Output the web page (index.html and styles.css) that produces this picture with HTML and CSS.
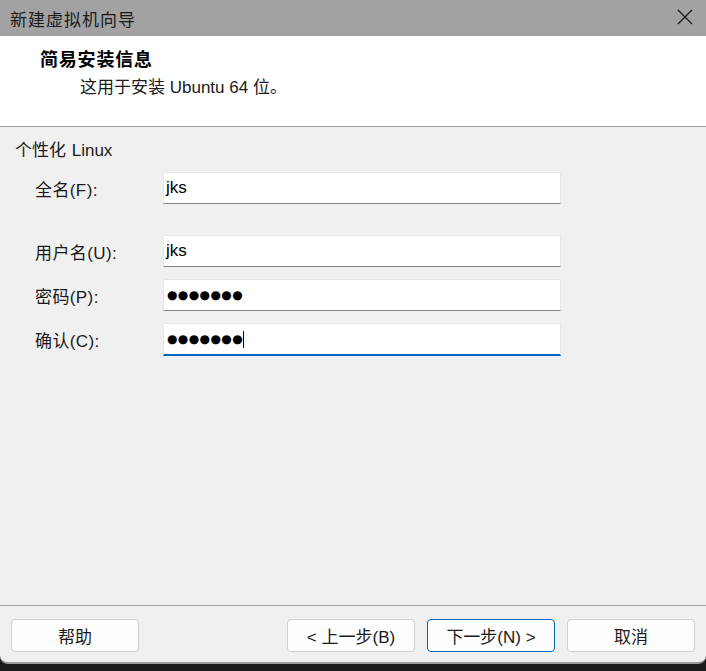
FILE: index.html
```html
<!DOCTYPE html>
<html lang="zh-CN">
<head>
<meta charset="utf-8">
<title>新建虚拟机向导</title>
<link rel="stylesheet" href="styles.css">
</head>
<body>
<div class="window">
  <div class="titlebar">
    <span class="title">新建虚拟机向导</span>
    <span class="close">
      <svg width="16" height="16" viewBox="0 0 16 16"><path d="M1 1 L15 15 M15 1 L1 15" stroke="#1a1a1a" stroke-width="1.3" fill="none"/></svg>
    </span>
  </div>
  <div class="header">
    <div class="h-title">简易安装信息</div>
    <div class="h-sub">这用于安装 Ubuntu 64 位。</div>
  </div>
  <div class="content">
    <div class="group-title">个性化 Linux</div>
    <div class="form">
      <div class="row">
        <span class="label">全名(F):</span>
        <div class="field">jks</div>
      </div>
      <div class="row row-gap">
        <span class="label">用户名(U):</span>
        <div class="field">jks</div>
      </div>
      <div class="row">
        <span class="label">密码(P):</span>
        <div class="field dots">●●●●●●●</div>
      </div>
      <div class="row">
        <span class="label">确认(C):</span>
        <div class="field dots focused">●●●●●●●<span class="caret"></span></div>
      </div>
    </div>
  </div>
  <div class="footer">
    <button class="btn">帮助</button>
    <div class="spacer"></div>
    <button class="btn">&lt; 上一步(B)</button>
    <button class="btn primary">下一步(N) &gt;</button>
    <button class="btn">取消</button>
  </div>
</div>
</body>
</html>
```

FILE: styles.css
```css
html, body {
  margin: 0;
  padding: 0;
  background: #1c1c1c;
  width: 706px;
  height: 671px;
  overflow: hidden;
}
body {
  font-family: "Liberation Sans", "Noto Sans CJK SC", sans-serif;
  color: #1a1a1a;
}
.window {
  width: 706px;
  height: 662px;
  background: #f0f0f0;
  border-bottom: 2px solid #9c9c9c;
  border-radius: 0 0 8px 8px;
  display: flex;
  flex-direction: column;
  overflow: hidden;
}
.titlebar {
  height: 36px;
  background: #a2a2a2;
  display: flex;
  align-items: center;
  justify-content: space-between;
  padding: 0 13px 0 10px;
  flex: none;
}
.title {
  font-size: 17px;
  letter-spacing: 1px;
  color: #1a1a1a;
}
.close {
  display: flex;
  width: 16px;
  height: 16px;
  margin-top: -2px;
}
.header {
  background: #ffffff;
  border-bottom: 1px solid #a0a0a0;
  padding: 12px 0 0 40px;
  box-sizing: border-box;
  height: 91px;
  flex: none;
}
.h-title {
  font-size: 18px;
  line-height: 24px;
  font-weight: bold;
  letter-spacing: 0.8px;
  color: #000;
}
.h-sub {
  margin: 4px 0 0 40px;
  font-size: 17px;
  line-height: 24px;
  color: #1a1a1a;
}
.content {
  flex: 1;
  padding: 12px 0 0 15px;
}
.group-title {
  font-size: 17px;
  line-height: 24px;
  word-spacing: 1px;
}
.form {
  margin-top: 9px;
  padding-left: 20px;
  display: flex;
  flex-direction: column;
  gap: 12px;
}
.row {
  display: flex;
  align-items: center;
}
.row-gap {
  margin-top: 19px;
}
.label {
  width: 128px;
  font-size: 17px;
  letter-spacing: 0.4px;
  color: #1a1a1a;
}
.field {
  width: 398px;
  height: 32px;
  box-sizing: border-box;
  background: #fff;
  border: 1px solid #e6e6e6;
  border-bottom: 1px solid #868686;
  border-radius: 2px 2px 0 0;
  padding: 0 0 0 2px;
  display: flex;
  align-items: center;
  font-size: 17px;
  color: #000;
}
.dots {
  font-family: "DejaVu Sans", sans-serif;
  font-size: 12px;
  letter-spacing: 0.4px;
  padding-left: 3px;
}
.focused {
  border-bottom: 2px solid #0067c0;
  height: 33px;
}
.caret {
  display: inline-block;
  width: 1px;
  height: 17px;
  background: #000;
}
.footer {
  flex: none;
  border-top: 1px solid #a0a0a0;
  display: flex;
  align-items: center;
  padding: 13px 11px 10px 11px;
  gap: 12px;
}
.spacer {
  flex: 1;
}
.btn {
  width: 128px;
  height: 33px;
  box-sizing: border-box;
  background: #fdfdfd;
  border: 1px solid #d0d0d0;
  border-radius: 4px;
  font-family: "Liberation Sans", "Noto Sans CJK SC", sans-serif;
  font-size: 17px;
  color: #1a1a1a;
  padding: 0;
}
.btn.primary {
  border-color: #0067c0;
}
```
